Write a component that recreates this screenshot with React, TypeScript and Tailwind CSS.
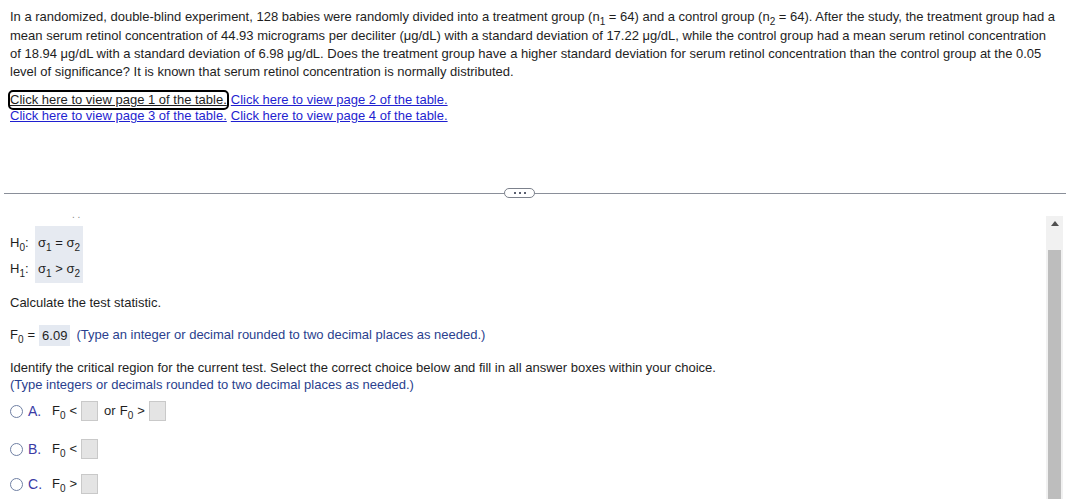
const Sub = ({ children }: { children: React.ReactNode }) => (
  <span className="inline-block text-[10px] leading-none align-[-4px]">{children}</span>
);

const Box = () => (
  <span className="inline-block w-[17px] h-[20px] bg-[#e4e4e4] border border-[#c9c9c9] align-middle" />
);

const Radio = ({ letter }: { letter: string }) => (
  <span className="flex items-center gap-[5px] w-[42px]">
    <span className="w-[13px] h-[13px] rounded-full border border-[#6f7fa3] bg-white" />
    <span className="text-[#3b3ba5] text-[14px]">{letter}.</span>
  </span>
);

const F0 = () => (
  <span>
    F<Sub>0</Sub>
  </span>
);

const App = () => {
  return (
    <div className="w-[1066px] h-[499px] bg-white overflow-hidden font-['Liberation_Sans',Arial,sans-serif] text-[13px] text-[#1e1e1e]">
      <p className="px-[10px] pt-[8px] leading-[18px]">
        In a randomized, double-blind experiment, 128 babies were randomly divided into a treatment group (n<Sub>1</Sub> = 64) and a control group (n<Sub>2</Sub> = 64). After the study, the treatment group had a mean serum retinol concentration of 44.93 micrograms per deciliter (μg/dL) with a standard deviation of 17.22 μg/dL, while the control group had a mean serum retinol concentration of 18.94 μg/dL with a standard deviation of 6.98 μg/dL. Does the treatment group have a higher standard deviation for serum retinol concentration than the control group at the 0.05 level of significance? It is known that serum retinol concentration is normally distributed.
      </p>

      <div className="px-[10px] mt-[11px] leading-[16px] text-[#1f1fd0]">
        <div className="flex gap-[4px]">
          <a href="#" className="underline outline-2 outline-black rounded-[3px] text-[#1e1e1e]">Click here to view page 1 of the table.</a>
          <a href="#" className="underline">Click here to view page 2 of the table.</a>
        </div>
        <div className="flex gap-[4px]">
          <a href="#" className="underline">Click here to view page 3 of the table.</a>
          <a href="#" className="underline">Click here to view page 4 of the table.</a>
        </div>
      </div>

      <div className="flex items-center ml-[4px] mt-[64px] h-[10px]">
        <div className="w-[500px] h-px bg-[#8a8f99]" />
        <button className="w-[31px] h-[10px] rounded-full border border-[#7c818c] bg-white flex items-center justify-center gap-[3px]">
          <span className="w-[2px] h-[2px] bg-[#5b6070]" />
          <span className="w-[2px] h-[2px] bg-[#5b6070]" />
          <span className="w-[2px] h-[2px] bg-[#5b6070]" />
        </button>
        <div className="flex-1 h-px bg-[#8a8f99]" />
      </div>

      <div className="flex mt-[14px] h-[295px]">
        <div className="flex-1 pl-[10px]">
          <div className="h-[14px] pl-[62px] text-[#888] text-[10px] leading-[6px]">. .</div>

          <div className="flex">
            <div className="flex flex-col pt-[4px] w-[25px]">
              <div className="h-[26px] leading-[26px] whitespace-nowrap">H<Sub>0</Sub>:</div>
              <div className="h-[26px] leading-[26px] whitespace-nowrap">H<Sub>1</Sub>:</div>
            </div>
            <div className="bg-[#e6eaf1] px-[3px] pt-[4px] pb-[1px] whitespace-nowrap">
              <div className="h-[26px] leading-[26px]">σ<Sub>1</Sub> = σ<Sub>2</Sub></div>
              <div className="h-[26px] leading-[26px]">σ<Sub>1</Sub> &gt; σ<Sub>2</Sub></div>
            </div>
          </div>

          <div className="mt-[11px] leading-[18px]">Calculate the test statistic.</div>

          <div className="mt-[12px] flex items-center h-[22px] whitespace-nowrap">
            <F0 />
            <span className="ml-[4px]">=</span>
            <span className="ml-[4px] bg-[#e4e9f1] px-[3px] h-[21px] leading-[21px]">6.09</span>
            <span className="ml-[6px] text-[#2a3f8e]">(Type an integer or decimal rounded to two decimal places as needed.)</span>
          </div>

          <div className="mt-[13px] leading-[17px]">
            Identify the critical region for the current test. Select the correct choice below and fill in all answer boxes within your choice.
          </div>
          <div className="leading-[17px] text-[#2a3f8e]">(Type integers or decimals rounded to two decimal places as needed.)</div>

          <div className="flex items-center h-[26px] mt-[5px] whitespace-nowrap">
            <Radio letter="A" />
            <span className="flex items-center gap-[4px]">
              <F0 /> &lt; <Box />
              <span className="ml-[2px]">or</span> <F0 /> &gt; <Box />
            </span>
          </div>
          <div className="flex items-center h-[26px] mt-[12px] whitespace-nowrap">
            <Radio letter="B" />
            <span className="flex items-center gap-[4px]">
              <F0 /> &lt; <Box />
            </span>
          </div>
          <div className="flex items-center h-[26px] mt-[9px] whitespace-nowrap">
            <Radio letter="C" />
            <span className="flex items-center gap-[4px]">
              <F0 /> &gt; <Box />
            </span>
          </div>
        </div>

        <div className="w-[17px] mr-[3px] mt-[4px] mb-[2px] bg-[#f1f1f1] flex flex-col">
          <div className="h-[34px] flex justify-center pt-[5px]">
            <svg width="8" height="5" viewBox="0 0 8 5">
              <path d="M0 5 L4 0 L8 5 Z" fill="#505050" />
            </svg>
          </div>
          <div className="flex-1 mx-[2px] bg-[#bdbdbd]" />
        </div>
      </div>
    </div>
  );
};

export default App;
